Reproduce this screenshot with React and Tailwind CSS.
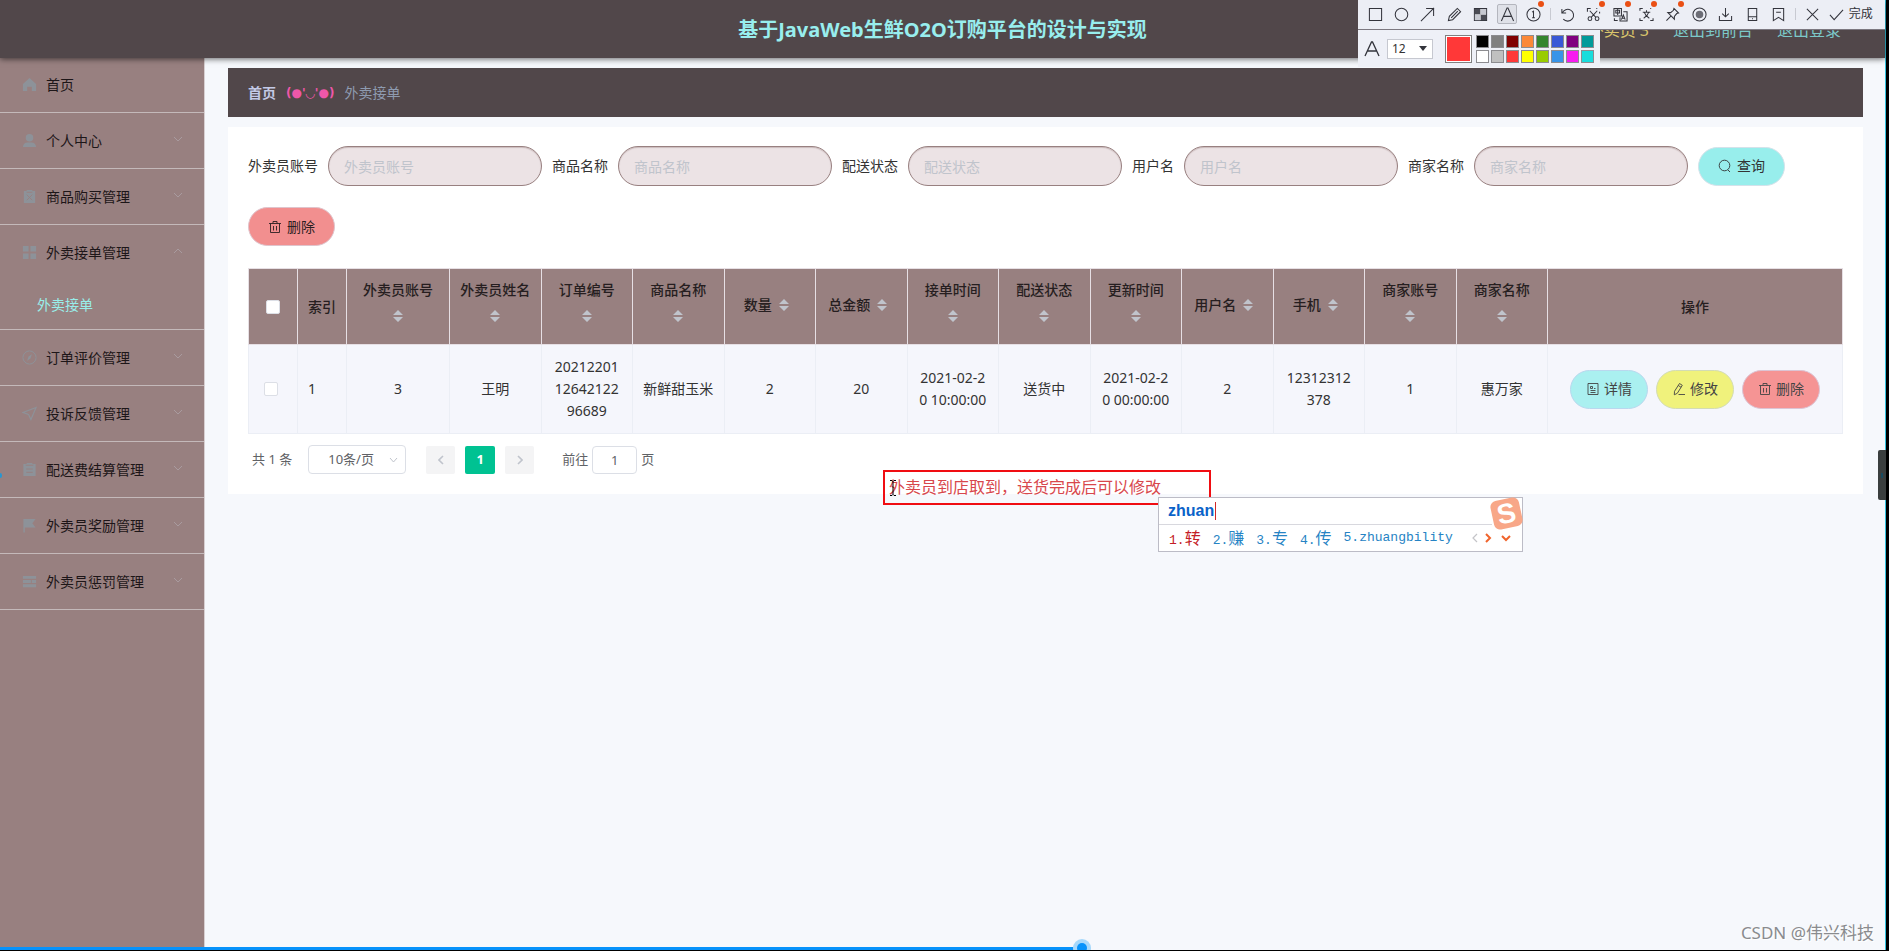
import React, { useState } from 'react';

const MENU = [
  { key: 'home', title: '首页', icon: 'home' },
  { key: 'center', title: '个人中心', icon: 'user', arrow: true },
  { key: 'buy', title: '商品购买管理', icon: 'claim', arrow: true },
  { key: 'take', title: '外卖接单管理', icon: 'grid', arrow: true, children: ['外卖接单'] },
  { key: 'comment', title: '订单评价管理', icon: 'compass', arrow: true },
  { key: 'complain', title: '投诉反馈管理', icon: 'plane', arrow: true },
  { key: 'fee', title: '配送费结算管理', icon: 'order', arrow: true },
  { key: 'reward', title: '外卖员奖励管理', icon: 'flag', arrow: true },
  { key: 'punish', title: '外卖员惩罚管理', icon: 'lines', arrow: true },
];

const FILTERS = ['外卖员账号', '商品名称', '配送状态', '用户名', '商家名称'];

const COLUMNS = [
  '外卖员账号', '外卖员姓名', '订单编号', '商品名称', '数量', '总金额', '接单时间',
  '配送状态', '更新时间', '用户名', '手机', '商家账号', '商家名称',
];

const ROWS = [
  ['3', '王明', '202122011264212296689', '新鲜甜玉米', '2', '20', '2021-02-20 10:00:00',
    '送货中', '2021-02-20 00:00:00', '2', '12312312378', '1', '惠万家'],
];

const SWATCHES = [
  ['黑色', 'bg-black'],
  ['灰色', 'bg-[#808080]'],
  ['深红', 'bg-[#800000]'],
  ['橙色', 'bg-[#fb8838]'],
  ['绿色', 'bg-[#34852f]'],
  ['蓝色', 'bg-[#3858d6]'],
  ['紫色', 'bg-[#800080]'],
  ['青色', 'bg-[#009a9a]'],
  ['白色', 'bg-white'],
  ['浅灰', 'bg-[#c0c0c0]'],
  ['红色', 'bg-[#ff3838]'],
  ['黄色', 'bg-[#ffff00]'],
  ['浅绿', 'bg-[#99cc00]'],
  ['浅蓝', 'bg-[#3894e8]'],
  ['洋红', 'bg-[#f71cf0]'],
  ['浅青', 'bg-[#18dcdc]'],
];

const TOOLS = [
  { key: 'rect', label: '矩形' },
  { key: 'ellipse', label: '椭圆' },
  { key: 'arrow', label: '箭头' },
  { key: 'pencil', label: '画笔' },
  { key: 'mosaic', label: '马赛克' },
  { key: 'text', label: '文字', active: true },
  { key: 'number', label: '序号', dot: true },
  { key: 'sep1' },
  { key: 'undo', label: '撤销' },
  { key: 'cut', label: '剪切', dot: true },
  { key: 'translate', label: '翻译', dot: true },
  { key: 'ocr', label: '文字识别', dot: true },
  { key: 'pin', label: '钉在桌面', dot: true },
  { key: 'record', label: '录制' },
  { key: 'download', label: '保存' },
  { key: 'phone', label: '发送到手机' },
  { key: 'bookmark', label: '收藏' },
  { key: 'sep2' },
  { key: 'close', label: '取消' },
];

export default function App() {
  return (
    <div className="relative flex min-h-screen flex-col overflow-hidden border-r-[3px] border-b border-black bg-[#f6f8fc] font-['Noto_Sans','Noto_Sans_CJK_SC',sans-serif] text-sm text-[#333]">
      <div className="flex flex-1 flex-col border-r border-[#35c5e0]">
        <Header />
        <div className="flex flex-1">
          <Sidebar />
          <main className="min-w-0 flex-1 pt-[10px] pr-[22px] pl-[23px]">
            <nav aria-label="面包屑" className="flex h-[49px] items-center gap-[10px] bg-[#51474a] px-5">
              <a href="#home" className="font-bold text-[#c3c9e6]">首页</a>
              <span className="font-['DejaVu_Sans',sans-serif] text-xs font-bold text-[#ee57a9]">(●'◡'●)</span>
              <span className="text-[#8e9bb0]">外卖接单</span>
            </nav>
            <section className="mt-[10px] bg-white px-5 pt-[19px] pb-5">
              <Filters />
              <OrderTable />
              <Pagination />
            </section>
          </main>
        </div>
      </div>

      <Annotation />
      <ImePanel />
      <CaptureToolbar />
      <PlayerChrome />
    </div>
  );
}

function Header() {
  return (
    <header className="relative z-10 flex h-[58px] items-center justify-center bg-[#51474a] pt-0.5 shadow-[0_1px_6px_rgba(0,0,0,0.6)]">
      <h1 className="text-xl font-bold text-[#98eeee]">基于JavaWeb生鲜O2O订购平台的设计与实现</h1>
      <div className="absolute right-11 flex gap-6 text-base">
        <span className="text-[#d9c56c]">外卖员 3</span>
        <a href="#front" className="text-[#7cc9c9]">退出到前台</a>
        <a href="#logout" className="text-[#7cc9c9]">退出登录</a>
      </div>
    </header>
  );
}

function Sidebar() {
  return (
    <aside className="w-[205px] shrink-0 border-r border-[#d8d0d2] bg-[#988080]">
      <ul className="-mt-px">
        {MENU.map((item) => (
          <li key={item.key} className="border-b border-[#c4b9ba]">
            <a href={`#${item.key}`} className="flex h-[55px] items-center pr-5 pl-5 text-[#1d1618]">
              <span className="mr-2 flex w-[18px] justify-center text-[#8d9299]">
                <MenuIcon name={item.icon} />
              </span>
              {item.title}
              {item.arrow && <Chevron up={!!item.children} />}
            </a>
            {item.children?.map((c) => (
              <a key={c} href="#orders" className="flex h-[49px] items-center pl-[37px] text-[#98eeea]">{c}</a>
            ))}
          </li>
        ))}
      </ul>
    </aside>
  );
}

function Chevron({ up }) {
  return (
    <svg className="mr-px mb-1 ml-auto text-[#a99b9f]" width="10" height="6" viewBox="0 0 10 6" fill="none" stroke="currentColor" aria-hidden="true">
      <path d={up ? 'M1 5l4-4 4 4' : 'M1 1l4 4 4-4'} />
    </svg>
  );
}

function Filters() {
  return (
    <form onSubmit={(e) => e.preventDefault()}>
      <div className="flex flex-wrap items-center gap-[10px]">
        {FILTERS.map((name) => (
          <label key={name} className="flex items-center gap-[10px]">
            {name}
            <input
              type="text"
              placeholder={name}
              className="h-10 w-[214px] rounded-full border border-[#988080] bg-[#ece3e5] px-[15px] shadow-[inset_0_1px_1px_rgba(152,128,128,0.4)] placeholder:text-[#c0c4cc]"
            />
          </label>
        ))}
        <button type="submit" className="flex h-[39px] items-center gap-[5px] rounded-full border border-[#d4e2ea] bg-[#98eeec] px-[19px] text-[#333]">
          <SearchIcon />查询
        </button>
      </div>
      <button type="button" className="mt-[21px] flex h-[39px] items-center gap-[5px] rounded-full border border-[#dfc4cc] bg-[#f28f8f] px-[19px] text-[#2c2022]">
        <TrashIcon />删除
      </button>
    </form>
  );
}

function OrderTable() {
  const [checked, setChecked] = useState(false);
  const box = 'block size-[14px] mx-auto appearance-none rounded-xs border border-[#dcdfe6] bg-white checked:bg-[#00c292]';

  return (
    <table className="mt-[22px] w-full table-fixed border-collapse text-center">
      <colgroup>
        <col className="w-[49px]" />
        <col className="w-[49px]" />
        <col className="w-[103px]" />
        {COLUMNS.slice(1).map((c) => <col key={c} />)}
        <col className="w-[295px]" />
      </colgroup>
      <thead>
        <tr className="h-[76px] bg-[#988080] text-[#261e20]">
          <th className="border border-[#e6dfe4]">
            <input type="checkbox" aria-label="全选" className={box} checked={checked} onChange={() => setChecked(!checked)} />
          </th>
          <th className="border border-[#e6dfe4] font-medium">索引</th>
          {COLUMNS.map((c) => (
            <th key={c} className="border border-[#e6dfe4] px-[9px] pb-[3px] font-medium">
              <div className="flex flex-wrap items-center justify-center leading-[22px]">
                {c}
                <SortCaret />
              </div>
            </th>
          ))}
          <th className="border border-[#e6dfe4] font-medium">操作</th>
        </tr>
      </thead>
      <tbody>
        {ROWS.map((row, i) => (
          <tr key={i} className="h-[89px] bg-[#f5f6fc] leading-[22px]">
            <td className="border border-[#ebeef5]">
              <div className="pr-1">
                <input type="checkbox" aria-label="选择此行" className={box} checked={checked} onChange={() => setChecked(!checked)} />
              </div>
            </td>
            <td className="border border-[#ebeef5] px-[10px] text-left">{i + 1}</td>
            {row.map((v, j) => (
              <td key={j} className="border border-[#ebeef5] px-[10px] break-all">{v}</td>
            ))}
            <td className="border border-[#ebeef5]">
              <div className="flex justify-center gap-2 text-[#444]">
                <button type="button" className="flex h-[39px] items-center gap-1 rounded-full border border-[#b9d8ee] bg-[#aaf0f0] px-[15px]">
                  <DetailIcon />详情
                </button>
                <button type="button" className="flex h-[39px] items-center gap-1 rounded-full border border-[#d3dcb4] bg-[#f0f27c] px-[15px]">
                  <EditIcon />修改
                </button>
                <button type="button" className="flex h-[39px] items-center gap-1 rounded-full border border-[#dcc4d4] bg-[#f59494] px-[15px]">
                  <TrashIcon />删除
                </button>
              </div>
            </td>
          </tr>
        ))}
      </tbody>
    </table>
  );
}

function Pagination() {
  return (
    <div className="mt-[11px] flex items-center pl-1 text-[13px] text-[#606266]">
      <span>共 1 条</span>
      <span className="relative ml-4">
        <select aria-label="每页条数" className="block h-[29px] w-[98px] appearance-none rounded-sm border border-[#dcdfe6] bg-white pl-[19px]">
          <option>10条/页</option>
        </select>
        <svg className="pointer-events-none absolute top-3 right-2 text-[#c0c4cc]" width="9" height="6" viewBox="0 0 9 6" fill="none" stroke="currentColor" aria-hidden="true">
          <path d="M1 1l3.5 4L8 1" />
        </svg>
      </span>
      <div className="ml-5 flex gap-[10px]">
        <button type="button" aria-label="上一页" className="flex h-7 w-[29px] items-center justify-center rounded-xs bg-[#f4f4f5] text-[#c0c4cc]">
          <svg width="6" height="10" viewBox="0 0 6 10" fill="none" stroke="currentColor" strokeWidth="1.6"><path d="M5 1L1 5l4 4" /></svg>
        </button>
        <button type="button" className="h-7 w-[30px] rounded-xs bg-[#00c292] font-bold text-white">1</button>
        <button type="button" aria-label="下一页" className="flex h-7 w-[29px] items-center justify-center rounded-xs bg-[#f4f4f5] text-[#c0c4cc]">
          <svg width="6" height="10" viewBox="0 0 6 10" fill="none" stroke="currentColor" strokeWidth="1.6"><path d="M1 1l4 4-4 4" /></svg>
        </button>
      </div>
      <label className="ml-7 flex items-center gap-1">
        前往
        <input type="text" defaultValue="1" className="h-7 w-[45px] rounded-sm border border-[#dcdfe6] bg-white text-center" />
        页
      </label>
    </div>
  );
}

/* Red note typed over the screen while capturing */
function Annotation() {
  return (
    <div className="absolute top-[470px] left-[883px] flex h-[35px] w-[328px] items-center border-2 border-[#f00d12] pb-0.5 pl-1 text-base text-[#d8474c]">
      外卖员到店取到，送货完成后可以修改
      <svg className="absolute top-2 left-1 text-black" width="8" height="16" viewBox="0 0 8 16" fill="none" stroke="currentColor" aria-hidden="true">
        <path d="M1 .5h2l1 1 1-1h2M4 1.5v13M1 15.5h2l1-1 1 1h2" />
      </svg>
    </div>
  );
}

function ImePanel() {
  const words = ['转', '赚', '专', '传'];
  return (
    <div className="absolute top-[497px] left-[1158px] w-[365px] border border-[#bcbcc6] bg-white">
      <div className="mr-[30px] flex h-[27px] items-center border-b border-[#d8d8de] pl-[9px] font-['Liberation_Sans',sans-serif] text-base font-bold text-[#0a62c9]">
        zhuan
        <span className="ml-px h-[18px] w-px bg-[#d02828]" />
      </div>
      <div className="flex h-[26px] items-center gap-3 pl-[10px] text-base text-[#2683c4]">
        {words.map((w, i) => (
          <span key={w} className={i === 0 ? 'text-[#c41c26]' : ''}>
            <span className="font-['Liberation_Mono',monospace] text-[13px]">{i + 1}.</span>{w}
          </span>
        ))}
        <span className="font-['Liberation_Mono',monospace] text-[13px]">5.zhuangbility</span>
        <svg className="ml-1.5" width="40" height="12" viewBox="0 0 40 12" fill="none" aria-hidden="true">
          <path d="M6 2L2 6l4 4" stroke="#c4c4c8" strokeWidth="1.2" />
          <path d="M15 2l4 4-4 4" stroke="#f0642c" strokeWidth="2" />
          <path d="M31 4l4 4 4-4" stroke="#f0642c" strokeWidth="2" />
        </svg>
      </div>
      <span className="absolute top-px right-px flex size-[29px] -rotate-12 items-center justify-center rounded-md bg-[#f8a788] font-['Liberation_Sans',sans-serif] text-[28px] font-bold text-white">S</span>
    </div>
  );
}

function CaptureToolbar() {
  return (
    <div className="absolute top-0 right-px z-20 w-[527px] text-[#33343c]">
      <div className="flex h-[30px] items-center justify-between border-b border-[#7c7880] bg-[#eceef5] pr-3 pb-px pl-[7px]">
        {TOOLS.map((t) =>
          t.label ? (
            <button
              key={t.key}
              type="button"
              aria-label={t.label}
              className={`relative flex size-5 items-center justify-center ${t.active ? 'rounded-xs border border-[#b4b6be] bg-[#dfe1e8]' : ''}`}
            >
              <ToolIcon name={t.key} />
              {t.dot && <span className="absolute -top-[3px] -right-px size-[6px] rounded-full bg-[#ea4f14]" />}
            </button>
          ) : (
            <span key={t.key} className="h-3 w-px bg-[#c8cad2]" />
          )
        )}
        <button type="button" className="flex items-center gap-[5px] text-xs">
          <ToolIcon name="check" />完成
        </button>
      </div>
      <div className="flex h-[37px] w-[242px] items-center bg-[#eef0f7] pl-[6px]">
        <svg width="16" height="16" viewBox="0 0 16 16" fill="none" stroke="currentColor" strokeWidth="1.3" aria-hidden="true">
          <path d="M1 15L7.500 1h1L15 15M3.500 10h9" />
        </svg>
        <span className="relative ml-[7px]">
          <select aria-label="字号" className="block h-5 w-[46px] appearance-none border border-[#c6c8d0] bg-white pl-1 text-xs leading-4 text-[#333]">
            <option>12</option>
          </select>
          <svg className="pointer-events-none absolute top-[7px] right-[6px]" width="8" height="6" viewBox="0 0 8 6" fill="currentColor" aria-hidden="true"><path d="M0 0h8L4 5z" /></svg>
        </span>
        <button type="button" aria-label="当前颜色" className="ml-3 h-[28px] w-[27px] border border-[#808080] bg-[#ff3838] outline-1 -outline-offset-2 outline-white" />
        <div className="ml-1 grid grid-cols-8 gap-[2px]">
          {SWATCHES.map(([name, color]) => (
            <button key={name} type="button" aria-label={name} className={`size-[13px] border border-[#8c8c90] ${color}`} />
          ))}
        </div>
      </div>
    </div>
  );
}

/* Video progress bar, side handle and watermark */
function PlayerChrome() {
  return (
    <>
      <div className="absolute bottom-0 left-0 h-[3px] w-[1082px] bg-[#0692fb]" />
      <span className="absolute bottom-[-7px] left-[1073px] flex size-[18px] items-center justify-center rounded-full bg-[#a6d8fb]">
        <span className="size-[10px] rounded-full bg-[#0692fb]" />
      </span>
      <span className="absolute top-[473px] left-0 h-[5px] w-[2px] rounded-r bg-[#2a96d0]" />
      <span className="absolute top-[450px] -right-[3px] flex h-[50px] w-[11px] items-center justify-end rounded-l-xs bg-[#3a3e3e]">
        <span className="mr-1 h-[5px] w-[2px] bg-[#174a60]" />
        <span className="-mr-px size-[3px] rounded-full bg-white" />
      </span>
      <span className="absolute right-3 bottom-[5px] text-[17px] text-[#8a8b8e] [text-shadow:1px_1px_0_#fff]">CSDN @伟兴科技</span>
    </>
  );
}

function SortCaret() {
  return (
    <span className="flex h-[30px] w-6 items-center justify-center">
      <svg width="10" height="12" viewBox="0 0 10 12" fill="#c0c4cc" aria-hidden="true">
        <path d="M5 0l5 5H0zM5 12L0 7h10z" />
      </svg>
    </span>
  );
}

function SearchIcon() {
  return (
    <svg width="14" height="14" viewBox="0 0 14 14" fill="none" stroke="currentColor" strokeWidth=".9" aria-hidden="true">
      <circle cx="6.500" cy="6.500" r="5.300" />
      <path d="M10 11l2 2" />
    </svg>
  );
}

function TrashIcon() {
  return (
    <svg width="14" height="14" viewBox="0 0 14 14" fill="none" stroke="currentColor" strokeWidth=".9" aria-hidden="true">
      <path d="M1 3.500h12M5 3.500v-2h4v2M2.500 3.500v9h9v-9M5.500 6v4.500M8.500 6v4.500" />
    </svg>
  );
}

function DetailIcon() {
  return (
    <svg width="14" height="14" viewBox="0 0 14 14" fill="none" stroke="currentColor" strokeWidth=".9" aria-hidden="true">
      <path d="M2 1.500h10v11H2zM4.500 4.500h2v2h-2zM4.500 8.500h5M4.500 10.500h5M8 6.500h1.500" />
    </svg>
  );
}

function EditIcon() {
  return (
    <svg width="14" height="14" viewBox="0 0 14 14" fill="none" stroke="currentColor" strokeWidth=".9" aria-hidden="true">
      <path d="M7.500 1.500l2.800 1.800-5 8-3 1.500.2-3.500zM6.300 3.500l2.800 1.800M6.500 12.500H13" />
    </svg>
  );
}

function MenuIcon({ name }) {
  const shapes = {
    home: <path d="M8 1l7 6.500V15h-4.500v-4.500h-5V15H1V7.500z" fill="currentColor" />,
    user: <path d="M8 1a4 4 0 110 8 4 4 0 010-8zM1 15c0-3 2-5 5-5h4c3 0 5 2 5 5z" fill="currentColor" />,
    claim: (
      <>
        <path d="M2 2h3V1h6v1h3v13H2z" fill="currentColor" />
        <path d="M5 6l6 6M11 6l-6 6M5 3.500h6" stroke="#988080" />
      </>
    ),
    grid: <path d="M1 1h6v6H1zM9 1h6v6H9zM1 9h6v6H1zM9 9h6v6H9z" fill="currentColor" />,
    compass: (
      <>
        <circle cx="8" cy="8" r="7" fill="none" stroke="currentColor" />
        <path d="M10.500 4.500L9 9l-3.500 2.500L7 7z" fill="currentColor" />
      </>
    ),
    plane: <path d="M15 1.500L1 7l6 2 2.500 5.500z" fill="none" stroke="currentColor" strokeWidth="1.200" />,
    order: (
      <>
        <path d="M1.500 2H5V1h6v1h3.500v13h-13z" fill="currentColor" />
        <path d="M4 3.500h8M4.500 7.500h7M4.500 11h7" stroke="#988080" />
      </>
    ),
    flag: <path d="M1.500 1h13L11 5.500l3.500 4.500H3v5.500H1.500z" fill="currentColor" />,
    lines: (
      <>
        <path d="M1 2h14v3H1zM1 6.500h14v3H1zM1 11h14v3H1z" fill="currentColor" />
        <path d="M10 6.500v3" stroke="#988080" />
      </>
    ),
  };
  return <svg width="15" height="15" viewBox="0 0 16 16" aria-hidden="true">{shapes[name]}</svg>;
}

function ToolIcon({ name }) {
  const shapes = {
    rect: <path d="M1.500 1.500h13v13h-13z" />,
    ellipse: <circle cx="8" cy="8" r="6.700" />,
    arrow: <path d="M1 15L15 1M6.500 1.500H14.500V9.500" />,
    pencil: <path d="M1.500 14.500l1-4.500L11 1.500l3.500 3.500L6 13.500zM4.500 11.500l7-7" />,
    mosaic: (
      <>
        <path d="M1.500 1.500h13v13h-13z" fill="#fff" />
        <path d="M2 2h6v6H2zM8 8h6v6H8z" fill="#4a4b54" stroke="none" />
        <path d="M8 2h6v6H8zM2 8h6v6H2z" fill="#c6c8d0" stroke="none" />
      </>
    ),
    text: <path d="M1.500 15L7.500 1h1l6 14M4 10h8" />,
    number: <path d="M8 1a7 7 0 110 14A7 7 0 018 1zM6.500 5.500L8 4.500v7M6.500 11.500h3" />,
    undo: <path d="M2 2v4.500h4.500M2.300 6.500A6.300 6.300 0 113.500 13" />,
    cut: <path d="M1.500 5V1.500H5M11 1.500h1M4 4l6.500 7M12 4l-6.500 7M4.200 10.500a2 2 0 110 4 2 2 0 010-4zM11.800 10.500a2 2 0 110 4 2 2 0 010-4zM14.500 5v2" />,
    translate: <path d="M1 1.500h8v8H1zM3 3.500h4v3H3zM5 2v6.500M11 5h4v10H7.500v-4M9 13.500l2-5 2 5M10 12h2M1.500 12v2.500H5" />,
    ocr: <path d="M1 4V1.500h3M1 12v2.500h3M12 1.500h1M15 12v2.500h-3M4 5.500h8M8 3.500v2M5.500 5.500c1 3 3 5 5.500 6.500M10.500 5.500c-1 3-3 5-5.500 6.500" />,
    pin: <path d="M9.500 1.500l5 5-2 .5-2.500 3v3L3 6h3l3-2.500zM6.500 9.500L1.500 14.500" />,
    record: (
      <>
        <circle cx="8" cy="8" r="7" />
        <circle cx="8" cy="8" r="4" fill="#6c6d76" stroke="none" />
      </>
    ),
    download: <path d="M8 1v9.500M4.500 7L8 10.500 11.500 7M1.500 9.500v5h13v-5" />,
    phone: <path d="M3.500 1.500h9v13h-9zM3.500 10.500h9M7.500 12.500h1" />,
    bookmark: <path d="M2.500 1.500h11v13L8 11l-5.500 3.500zM5.500 5.500h5" />,
    close: <path d="M2 2l12 12M14 2L2 14" />,
    check: <path d="M1 8.500l4.500 5L15 3" />,
  };
  return (
    <svg width="15" height="15" viewBox="0 0 16 16" fill="none" stroke="currentColor" strokeWidth="1.100" className="shrink-0" aria-hidden="true">
      {shapes[name]}
    </svg>
  );
}
